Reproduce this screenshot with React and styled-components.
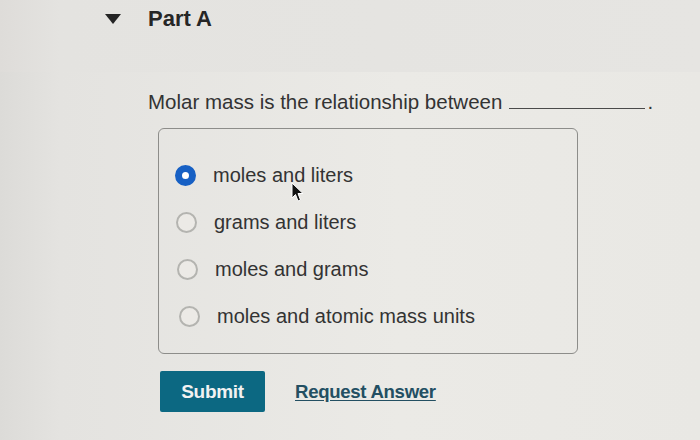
import React from 'react';
import styled, { createGlobalStyle } from 'styled-components';

const Global = createGlobalStyle`
  html, body {
    margin: 0;
    padding: 0;
    background: #e8e7e3;
  }
  body {
    font-family: "Liberation Sans", Arial, sans-serif;
    color: #2e2e2e;
  }
`;

const Page = styled.div`
  position: relative;
  width: 700px;
  height: 440px;
  overflow: hidden;
  background: linear-gradient(90deg, #dcdbd8 0px, #e4e3e0 60px, #ebeae6 400px, #e9e8e4 700px);
`;

const Header = styled.header`
  height: 72px;
  display: flex;
  align-items: flex-start;
  padding: 6px 0 0 105px;
  box-sizing: border-box;
  background: linear-gradient(90deg, #dedcd9 0px, #e4e3e0 60px, #e6e5e2 700px);
`;

const Caret = styled.span`
  width: 0;
  height: 0;
  border-left: 8px solid transparent;
  border-right: 8px solid transparent;
  border-top: 10px solid #242424;
  margin-top: 8px;
`;

const PartTitle = styled.h2`
  margin: 0 0 0 27px;
  font-size: 22px;
  font-weight: 700;
  color: #262626;
  line-height: 26px;
`;

const Body = styled.section`
  padding: 17px 0 0 148px;
`;

const Question = styled.p`
  margin: 0;
  font-size: 20.5px;
  line-height: 25px;
  color: #333;
  display: flex;
  align-items: flex-end;
`;

const Blank = styled.span`
  display: inline-block;
  width: 136px;
  height: 1px;
  background: #4a4a4a;
  margin: 0 2px 5px 7px;
`;

const Choices = styled.div`
  margin: 14px 0 0 10px;
  width: 420px;
  height: 226px;
  box-sizing: border-box;
  border: 1.5px solid #8d8d8a;
  border-radius: 6px;
  padding: 34px 0 0 16px;
  display: flex;
  flex-direction: column;
  gap: 23px;
`;

const Option = styled.label`
  display: flex;
  align-items: center;
  gap: 17px;
  height: 24px;
  font-size: 20px;
  color: #333;
  padding-left: ${p => p.shift}px;
`;

const Radio = styled.span`
  width: 21px;
  height: 21px;
  border-radius: 50%;
  box-sizing: border-box;
  flex: none;
  ${p => p.checked ? `
    background: #fff;
    border: 7px solid #1760c4;
  ` : `
    border: 2px solid #b4b4b0;
    background: #eceae6;
  `}
`;

const Cursor = styled.svg`
  position: absolute;
  left: 291px;
  top: 182px;
`;

const Actions = styled.div`
  display: flex;
  align-items: center;
  gap: 30px;
  margin: 17px 0 0 12px;
`;

const SubmitButton = styled.button`
  width: 105px;
  height: 41px;
  border: none;
  border-radius: 2px;
  background: #0c6882;
  color: #f2f2f2;
  font-family: inherit;
  font-size: 19px;
  font-weight: 700;
  letter-spacing: -0.3px;
`;

const RequestLink = styled.a`
  font-size: 18.6px;
  font-weight: 700;
  color: #234f62;
  text-decoration: underline;
  text-underline-offset: 2px;
  letter-spacing: -0.3px;
`;

const options = [
  { text: 'moles and liters', checked: true, shift: 0 },
  { text: 'grams and liters', shift: 1 },
  { text: 'moles and grams', shift: 2 },
  { text: 'moles and atomic mass units', shift: 4 },
];

export default function App() {
  return (
    <Page>
      <Global />
      <Header>
        <Caret />
        <PartTitle>Part A</PartTitle>
      </Header>
      <Body>
        <Question>
          Molar mass is the relationship between<Blank />.
        </Question>
        <Choices>
          {options.map((o, i) => (
            <Option key={i} shift={o.shift}>
              <Radio checked={o.checked} />
              {o.text}
            </Option>
          ))}
        </Choices>
        <Actions>
          <SubmitButton>Submit</SubmitButton>
          <RequestLink>Request Answer</RequestLink>
        </Actions>
      </Body>
      <Cursor width="14" height="22" viewBox="0 0 14 22">
        <path d="M1 1 L1 16 L4.5 12.5 L7 19 L9.5 18 L7 11.5 L12 11.5 Z" fill="#111" stroke="#fff" strokeWidth="1" />
      </Cursor>
    </Page>
  );
}
